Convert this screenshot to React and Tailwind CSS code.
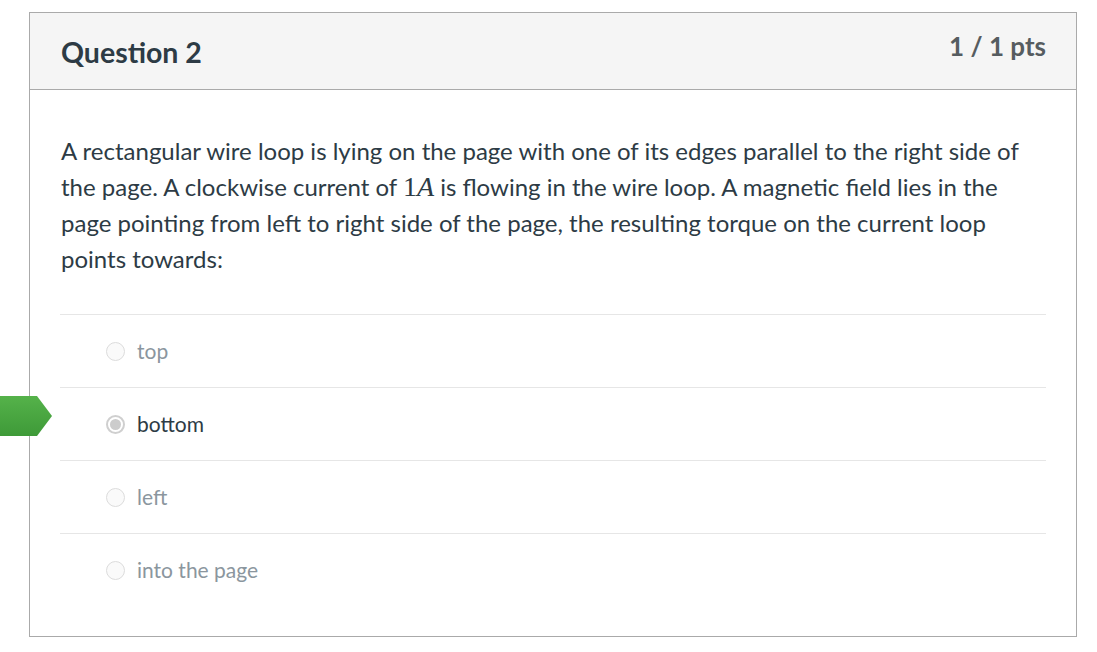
export default function App() {
  const answers = [
    { text: 'top', selected: false },
    { text: 'bottom', selected: true },
    { text: 'left', selected: false },
    { text: 'into the page', selected: false },
  ];

  return (
    <div className="min-h-[652px] bg-white pt-3 pl-[29px] pr-5" style={{ fontFamily: 'Lato, "Open Sans", sans-serif' }}>
      <div className="relative w-[1048px] border border-[#aaaaaa]">
        {/* header */}
        <div className="flex h-[77px] items-start justify-between border-b border-[#aaaaaa] bg-[#f5f5f5] pl-[31px] pr-[30px]">
          <h2 className="pt-[18px] text-[28.5px] font-bold leading-[42px] text-[#2d3b45]">Question 2</h2>
          <div className="pt-[14px] text-[26px] font-bold leading-[39px] text-[#565c60]">1 / 1 pts</div>
        </div>

        {/* body */}
        <div className="px-[30px] pt-[43px] pb-[30px]">
          <p className="pl-[1px] text-[24px] leading-[36px] text-[#2d3b45]">
            A rectangular wire loop is lying on the page with one of its edges parallel to the right side of the page. A clockwise current of{' '}
            <span className="text-[28px] leading-[20px]" style={{ fontFamily: '"Liberation Serif", "DejaVu Serif", serif' }}>
              1<i>A</i>
            </span>{' '}
            is flowing in the wire loop. A magnetic field lies in the page pointing from left to right side of the page, the resulting torque on the current loop points towards:
          </p>

          <div className="mt-[37px]">
            {answers.map((a) => (
              <div key={a.text} className="relative flex h-[73px] items-center border-t border-[#e6e6e6] pl-[46px]">
                {a.selected && (
                  <svg className="absolute left-[-60px] top-[8px]" width="53" height="40" viewBox="0 0 53 40">
                    <defs>
                      <linearGradient id="g" x1="0" y1="0" x2="0" y2="1">
                        <stop offset="0" stopColor="#55b24a" />
                        <stop offset="1" stopColor="#3e9a38" />
                      </linearGradient>
                    </defs>
                    <polygon points="0,0 37,0 52,20 37,40 0,40" fill="url(#g)" />
                  </svg>
                )}
                {a.selected ? (
                  <span className="flex h-[19px] w-[19px] items-center justify-center rounded-full border-2 border-[#cfcfcf] bg-white">
                    <span className="h-[11px] w-[11px] rounded-full bg-[#cccccc]" />
                  </span>
                ) : (
                  <span className="h-[19px] w-[19px] rounded-full border border-[#dcdcdc] bg-[#fafafa]" />
                )}
                <span className={`ml-[12px] text-[21px] ${a.selected ? 'text-[#2d3b45]' : 'text-[#8b969e]'}`}>{a.text}</span>
              </div>
            ))}
          </div>
        </div>
      </div>
    </div>
  );
}
